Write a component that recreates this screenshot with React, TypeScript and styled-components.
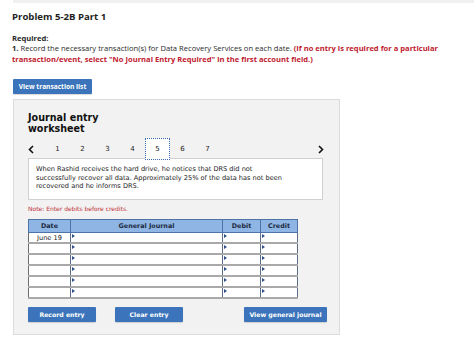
import styled, { createGlobalStyle } from 'styled-components';

const GlobalStyle = createGlobalStyle`
    body {
        margin: 0;
        background: #ffffff;
        font-family: 'Open Sans', Lato, Arial, sans-serif;
        color: #222;
    }
`;

const steps = [1, 2, 3, 4, 5, 6, 7];
const rows = ['June 19', '', '', '', '', ''];

const Chevron = ({ dir }: { dir: 'left' | 'right' }) => (
    <svg width="7" height="9" viewBox="0 0 7 9">
        <polyline
            points={dir === 'left' ? '5,1 1.5,4.5 5,8' : '2,1 5.5,4.5 2,8'}
            fill="none"
            stroke="#111"
            strokeWidth="1.6"
        />
    </svg>
);

const App = () => {
    return (
        <>
            <GlobalStyle />
            <Page>
                <TopRule />
                <Title>Problem 5-2B Part 1</Title>
                <Required>
                    <Label>Required:</Label>
                    <Line>
                        <b>1.</b> Record the necessary transaction(s) for Data Recovery Services on each date.{' '}
                        <Warn>(If no entry is required for a particular</Warn>
                    </Line>
                    <Line>
                        <Warn>transaction/event, select "No Journal Entry Required" in the first account field.)</Warn>
                    </Line>
                </Required>
                <TopButton $width={79}>View transaction list</TopButton>

                <Panel>
                    <PanelTitle>
                        Journal entry
                        <br />
                        worksheet
                    </PanelTitle>
                    <Nav>
                        <Arrow>
                            <Chevron dir="left" />
                        </Arrow>
                        {steps.map((s) => (
                            <Step key={s} $active={s === 5}>
                                {s}
                            </Step>
                        ))}
                        <RightArrow>
                            <Chevron dir="right" />
                        </RightArrow>
                    </Nav>
                    <Description>
                        When Rashid receives the hard drive, he notices that DRS did not
                        <br />
                        successfully recover all data. Approximately 25% of the data has not been
                        <br />
                        recovered and he informs DRS.
                    </Description>
                    <Note>Note: Enter debits before credits.</Note>
                    <Journal>
                        <thead>
                            <tr>
                                <Th $w={41}>Date</Th>
                                <Th $w={151}>General Journal</Th>
                                <Th $w={37}>Debit</Th>
                                <Th $w={36}>Credit</Th>
                            </tr>
                        </thead>
                        <tbody>
                            {rows.map((date, i) => (
                                <tr key={i}>
                                    <DateCell>{date}</DateCell>
                                    <InputCell />
                                    <InputCell />
                                    <InputCell />
                                </tr>
                            ))}
                        </tbody>
                    </Journal>
                    <Actions>
                        <BlueButton $width={68}>Record entry</BlueButton>
                        <BlueButton $width={68}>Clear entry</BlueButton>
                        <Spacer />
                        <BlueButton $width={83}>View general journal</BlueButton>
                    </Actions>
                </Panel>
            </Page>
        </>
    );
};

const Page = styled.div`
    width: 474px;
    height: 364px;
    overflow: hidden;
`;

const TopRule = styled.div`
    margin-left: 13px;
    height: 3px;
    background: #f0f0f0;
`;

const Title = styled.div`
    margin: 7px 0 0 12px;
    font-size: 9.6px;
    font-weight: 700;
    line-height: 14px;
    color: #1e1e1e;
`;

const Required = styled.div`
    margin: 9px 0 0 12px;
    font-size: 7.6px;
    line-height: 10.4px;
    color: #2a2a2a;
`;

const Label = styled.div`
    font-weight: 700;
`;

const Line = styled.div`
    white-space: nowrap;
`;

const Warn = styled.span`
    color: #c0202e;
    font-weight: 700;
`;

const BlueButton = styled.div<{ $width: number }>`
    width: ${({ $width }) => $width}px;
    height: 15px;
    display: flex;
    align-items: center;
    justify-content: center;
    background: #3b74ba;
    border-radius: 1px;
    color: #ffffff;
    font-family: 'DejaVu Sans', Verdana, sans-serif;
    font-size: 6.2px;
    font-weight: 700;
    box-shadow: 0 1px 1px rgba(0, 0, 0, 0.15);
`;

const TopButton = styled(BlueButton)`
    margin: 15px 0 0 13px;
    font-family: 'Open Sans', Arial, sans-serif;
    font-size: 6.6px;
`;

const Panel = styled.div`
    margin: 5px 0 0 13px;
    box-sizing: border-box;
    width: 327px;
    height: 236px;
    padding: 12px 12px 0 14px;
    background: #f2f2f2;
    border: 1px solid #dcdcdc;
    font-family: 'DejaVu Sans', Verdana, sans-serif;
`;

const PanelTitle = styled.div`
    font-size: 9.6px;
    font-weight: 700;
    line-height: 11px;
    color: #111;
`;

const Nav = styled.div`
    margin-top: 4px;
    width: 296px;
    height: 22px;
    display: flex;
    align-items: center;
`;

const Arrow = styled.div`
    width: 17px;
    display: flex;
    align-items: center;
`;

const RightArrow = styled(Arrow)`
    margin-left: auto;
    justify-content: flex-end;
    width: 7px;
`;

const Step = styled.div<{ $active: boolean }>`
    box-sizing: border-box;
    width: 25px;
    height: 22px;
    display: flex;
    align-items: center;
    justify-content: center;
    font-size: 7px;
    color: #222;
    background: ${({ $active }) => ($active ? '#ffffff' : 'transparent')};
    border: 1px dotted ${({ $active }) => ($active ? '#3a6bb0' : 'transparent')};
    position: relative;
    z-index: 1;
`;

const Description = styled.div`
    box-sizing: border-box;
    margin-top: -2px;
    width: 295px;
    height: 42px;
    padding: 6px 7px;
    background: #ffffff;
    border: 1px solid #d0d0d0;
    font-size: 6.6px;
    line-height: 8.4px;
    color: #1c1c1c;
`;

const Note = styled.div`
    margin-top: 5px;
    font-size: 6px;
    line-height: 8px;
    color: #c0303a;
`;

const Journal = styled.table`
    margin-top: 6px;
    width: 265px;
    border-collapse: collapse;
    table-layout: fixed;
    border: 1px solid #6d6d6d;
    background: #ffffff;
`;

const Th = styled.th<{ $w: number }>`
    width: ${({ $w }) => $w}px;
    height: 12px;
    padding: 0;
    background: #8fb5e4;
    border: 1px solid #4d74a8;
    font-size: 6.4px;
    font-weight: 700;
    color: #1b2a40;
    text-align: center;
`;

const DateCell = styled.td`
    height: 9px;
    padding: 0;
    border-bottom: 2px solid #a9a9a9;
    border-right: 1px solid #5a6e8a;
    font-size: 6.6px;
    text-align: center;
    color: #222;
`;

const InputCell = styled.td`
    position: relative;
    height: 9px;
    padding: 0;
    border-bottom: 2px solid #a9a9a9;
    border-right: 1px solid #5a6e8a;

    &::before {
        content: '';
        position: absolute;
        top: 1px;
        left: 1px;
        border-left: 3px solid #2f4f85;
        border-top: 2px solid transparent;
        border-bottom: 2px solid transparent;
    }
`;

const Actions = styled.div`
    margin-top: 8px;
    width: 299px;
    display: flex;
    gap: 19px;
`;

const Spacer = styled.div`
    flex: 1;
`;

export default App;
